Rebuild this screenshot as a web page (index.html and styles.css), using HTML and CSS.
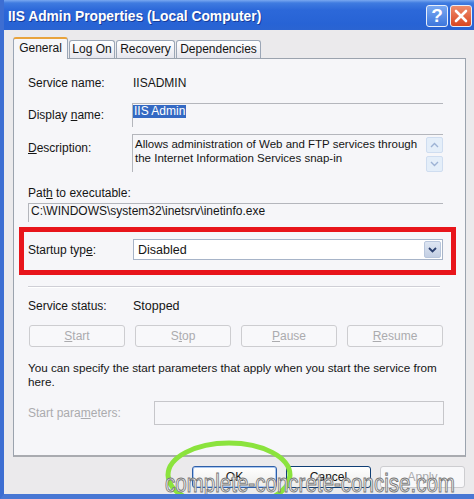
FILE: index.html
```html
<!DOCTYPE html>
<html lang="en">
<head>
    <meta charset="UTF-8">
    <title>IIS Admin Properties (Local Computer)</title>
    <link rel="stylesheet" href="styles.css">
</head>
<body>
    <div class="window">
        <div class="titlebar">
            <span class="title">IIS Admin Properties (Local Computer)</span>
            <div class="caption-btns">
                <span class="cap help">?</span>
                <span class="cap close">
                    <svg width="14" height="14" viewBox="0 0 14 14"><path d="M2 2 L12 12 M12 2 L2 12" stroke="#fff" stroke-width="2.6" stroke-linecap="round"/></svg>
                </span>
            </div>
        </div>
        <div class="client">
            <div class="tabs">
                <div class="tab active" style="width:55px">General</div>
                <div class="tab" style="width:46px">Log On</div>
                <div class="tab" style="width:59px">Recovery</div>
                <div class="tab" style="width:85px">Dependencies</div>
            </div>
            <div class="panel">
                <div class="row row-name">
                    <span>Service name:</span>
                    <span>IISADMIN</span>
                </div>
                <div class="row row-display">
                    <span class="label">Display <u>n</u>ame:</span>
                    <div class="field"><span class="selected">IIS Admin</span></div>
                </div>
                <div class="row row-desc">
                    <span class="label"><u>D</u>escription:</span>
                    <div class="field desc">
                        <div class="desc-text">Allows administration of Web and FTP services through<br>the Internet Information Services snap-in</div>
                        <div class="scroll">
                            <span class="arrow"><svg width="9" height="6" viewBox="0 0 9 6"><path d="M1 5 L4.5 1.5 L8 5" fill="none" stroke="#9DB2D4" stroke-width="1.4"/></svg></span>
                            <span class="arrow"><svg width="9" height="6" viewBox="0 0 9 6"><path d="M1 1 L4.5 4.5 L8 1" fill="none" stroke="#9DB2D4" stroke-width="1.4"/></svg></span>
                        </div>
                    </div>
                </div>
                <div class="path-label">Pat<u>h</u> to executable:</div>
                <div class="path-box">C:\WINDOWS\system32\inetsrv\inetinfo.exe</div>
                <div class="startup">
                    <span class="label">Startup typ<u>e</u>:</span>
                    <div class="select">
                        <span>Disabled</span>
                        <span class="drop"><svg width="9" height="6" viewBox="0 0 9 6"><path d="M1 1 L4.5 4.5 L8 1" fill="none" stroke="#2A3F6E" stroke-width="1.8"/></svg></span>
                    </div>
                </div>
                <div class="separator"></div>
                <div class="row row-status">
                    <span>Service status:</span>
                    <span>Stopped</span>
                </div>
                <div class="svc-buttons">
                    <button class="btn" disabled><u>S</u>tart</button>
                    <button class="btn" disabled>S<u>t</u>op</button>
                    <button class="btn" disabled><u>P</u>ause</button>
                    <button class="btn" disabled><u>R</u>esume</button>
                </div>
                <p class="hint">You can specify the start parameters that apply when you start the service from<br>here.</p>
                <div class="params">
                    <span class="label">Start para<u>m</u>eters:</span>
                    <div class="param-input"></div>
                </div>
            </div>
            <div class="dlg-buttons">
                <button class="btn dlg default">OK</button>
                <button class="btn dlg">Cancel</button>
                <button class="btn dlg" disabled>Apply</button>
            </div>
        </div>
        <svg class="ring" width="474" height="499" viewBox="0 0 474 499">
            <ellipse cx="229" cy="475" rx="61" ry="32" fill="none" stroke="#8BE33D" stroke-width="5"/>
        </svg>
        <div class="watermark">complete-concrete-concise.com</div>
    </div>
</body>
</html>
```

FILE: styles.css
```css
html, body {
    margin: 0;
    padding: 0;
    overflow: hidden;
}
body {
    font-family: "Liberation Sans", Arial, sans-serif;
    font-size: 12px;
    color: #151515;
}
.window {
    position: relative;
    width: 474px;
    height: 499px;
    box-sizing: border-box;
    overflow: hidden;
    background: #EBEAEC;
    border-left: 4px solid #3D6ED2;
    border-bottom: 5px solid #4877D4;
    display: flex;
    flex-direction: column;
}
.titlebar {
    height: 30px;
    flex: none;
    display: flex;
    align-items: center;
    justify-content: space-between;
    padding: 0 2px 0 4px;
    background: linear-gradient(to bottom, #79A8F0 0, #3F7BE0 3px, #2C68D9 10px, #2763D5 24px, #2A64D2 30px);
}
.title {
    color: #fff;
    font-weight: bold;
    font-size: 13.8px;
    text-shadow: 1px 1px 0 #173C9A;
    margin-top: 2px;
}
.caption-btns {
    display: flex;
    gap: 2px;
    margin-top: 2px;
}
.cap {
    width: 22px;
    height: 22px;
    box-sizing: border-box;
    border: 1px solid #E8EEF9;
    border-radius: 3px;
    display: flex;
    align-items: center;
    justify-content: center;
    color: #fff;
}
.help {
    background: linear-gradient(to bottom, #7AA9F2, #3D76DC);
    font-weight: bold;
    font-size: 19px;
}
.close {
    background: linear-gradient(to bottom, #EF8D6E, #D9461F);
}
.client {
    flex: 1;
    padding: 7px 0 0 9px;
}
.tabs {
    display: flex;
    align-items: flex-end;
    height: 21px;
    gap: 1px;
}
.tab {
    height: 18px;
    box-sizing: border-box;
    border: 1px solid #9BA6B6;
    border-bottom: none;
    border-radius: 3px 3px 0 0;
    background: linear-gradient(to bottom, #FFFFFF, #E6E6EE);
    text-align: center;
    line-height: 17px;
    position: relative;
}
.tab.active {
    height: 22px;
    margin-bottom: -1px;
    border-top: 2px solid #E8A33C;
    background: #F6F6F9;
    line-height: 18px;
    z-index: 1;
}
.panel {
    width: 453px;
    height: 399px;
    box-sizing: border-box;
    border: 1px solid #9BA3AE;
    border-bottom: 2px solid #A9ABB0;
    background: #F6F6F9;
    padding: 17px 22px 0 14px;
}
.row {
    display: grid;
    grid-template-columns: 105px 1fr;
    line-height: 15px;
}
.row-display {
    margin-top: 12px;
    height: 24px;
}
.row-display .label {
    padding-top: 5px;
}
.field {
    border-top: 1px solid #B4B6BC;
    border-left: 1px solid #B4B6BC;
    margin-left: -1px;
}
.selected {
    display: inline-block;
    background: #3469C3;
    color: #fff;
    line-height: 13px;
    padding: 0 1px;
    margin-top: 1px;
}
.row-desc {
    margin-top: 7px;
    height: 38px;
}
.row-desc .label {
    padding-top: 7px;
}
.desc {
    display: flex;
    justify-content: space-between;
}
.desc-text {
    line-height: 14px;
    padding: 2px 0 0 2px;
    font-size: 11.5px;
    white-space: nowrap;
}
.scroll {
    display: flex;
    flex-direction: column;
    gap: 3px;
    padding-top: 2px;
}
.arrow {
    width: 17px;
    height: 16px;
    box-sizing: border-box;
    border: 1px solid #CFDDF0;
    border-radius: 2px;
    background: #E4EEF9;
    display: flex;
    align-items: center;
    justify-content: center;
}
.path-label {
    margin-top: 14px;
    line-height: 15px;
}
.path-box {
    margin-top: 2px;
    height: 19px;
    box-sizing: border-box;
    border-top: 1px solid #B4B6BC;
    border-left: 1px solid #B4B6BC;
    padding-left: 2px;
    line-height: 15px;
}
.startup {
    margin: 5px -13px 0 -9px;
    border: 5px solid #E8151B;
    padding: 7px 8px 10px 4px;
    display: grid;
    grid-template-columns: 105px 1fr;
    align-items: center;
}
.select {
    height: 21px;
    box-sizing: border-box;
    border: 1px solid #A7B4C8;
    background: #fff;
    display: flex;
    align-items: center;
    justify-content: space-between;
    padding: 0 1px 0 4px;
    font-size: 12.5px;
}
.drop {
    width: 17px;
    height: 17px;
    box-sizing: border-box;
    border: 1px solid #B8C6DC;
    border-radius: 2px;
    background: linear-gradient(to bottom, #DDE5F2, #C3CFE3);
    display: flex;
    align-items: center;
    justify-content: center;
}
.separator {
    margin: 11px 3px 0 0;
    border-top: 1px solid #CFCFD6;
    border-bottom: 1px solid #FFFFFF;
}
.row-status {
    margin-top: 11px;
}
.row-status span:last-child {
    font-size: 12.5px;
}
.svc-buttons {
    margin: 11px 0 0 1px;
    display: grid;
    grid-template-columns: repeat(4, 1fr);
    gap: 10px;
}
.btn {
    height: 22px;
    box-sizing: border-box;
    border: 1px solid #0F3E75;
    border-radius: 3px;
    background: linear-gradient(to bottom, #FFFFFF, #ECECEA);
    font-family: "Liberation Sans", Arial, sans-serif;
    font-size: 12px;
    color: #151515;
    padding: 0;
}
.btn:disabled {
    border-color: #CDCDD0;
    background: #F8F8FA;
    color: #ABABAE;
}
.hint {
    margin: 14px 0 0;
    line-height: 14px;
    font-size: 11.7px;
    white-space: nowrap;
}
.params {
    margin-top: 12px;
    display: grid;
    grid-template-columns: 126px 1fr;
    align-items: center;
}
.params .label {
    color: #ABABAE;
}
.param-input {
    height: 24px;
    box-sizing: border-box;
    border: 1px solid #C6C6CA;
    margin-right: -1px;
}
.dlg-buttons {
    display: flex;
    justify-content: flex-end;
    gap: 9px;
    margin-top: 9px;
    padding-right: 9px;
}
.dlg {
    width: 85px;
}
.dlg.default {
    border-color: #2E5FA8;
    box-shadow: inset 0 0 0 1px #A9C6F0;
}
.ring {
    position: absolute;
    left: -4px;
    top: 0;
    pointer-events: none;
}
.watermark {
    position: absolute;
    left: 161px;
    top: 470px;
    font-size: 26px;
    line-height: 26px;
    white-space: nowrap;
    color: #F2F2F2;
    -webkit-text-stroke: 1px #777;
    transform: scaleX(0.79);
    transform-origin: left top;
}
```
